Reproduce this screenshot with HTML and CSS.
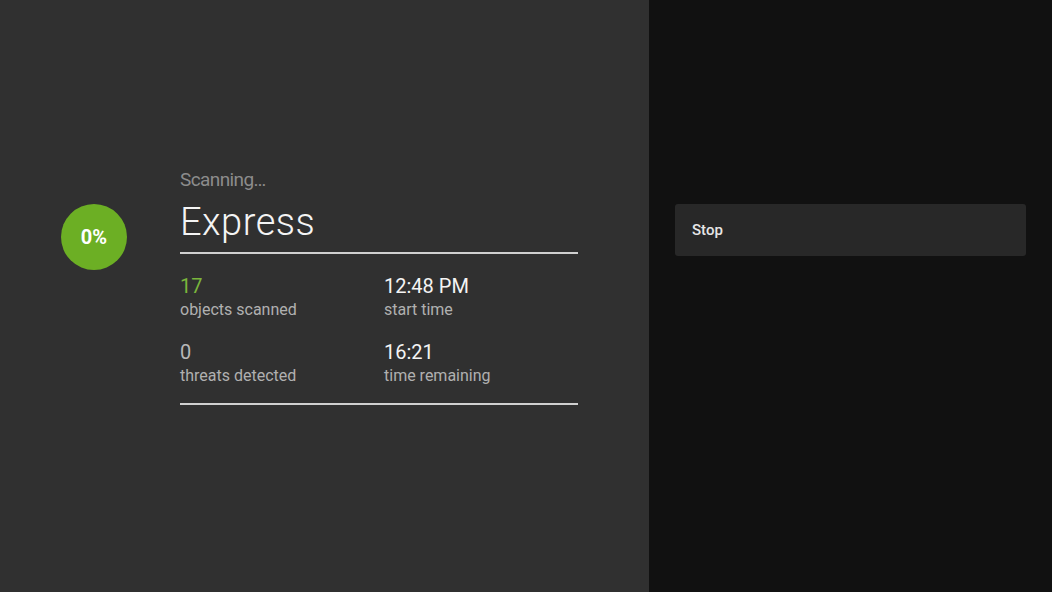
FILE: index.html
```html
<!DOCTYPE html>
<html>
<head>
<meta charset="utf-8">
<link rel="stylesheet" href="styles.css">
</head>
<body>
<div class="screen">
  <section class="main">
    <div class="progress">0%</div>
    <div class="details">
      <div class="status">Scanning…</div>
      <h1 class="title">Express</h1>
      <div class="stats">
        <div class="stat">
          <div class="value green">17</div>
          <div class="label">objects scanned</div>
        </div>
        <div class="stat">
          <div class="value">12:48 PM</div>
          <div class="label">start time</div>
        </div>
        <div class="stat">
          <div class="value dim">0</div>
          <div class="label">threats detected</div>
        </div>
        <div class="stat">
          <div class="value">16:21</div>
          <div class="label">time remaining</div>
        </div>
      </div>
    </div>
  </section>
  <aside class="actions">
    <button class="action">Stop</button>
  </aside>
</div>
</body>
</html>
```

FILE: styles.css
```css
html, body {
  margin: 0;
  padding: 0;
  height: 100%;
}
body {
  font-family: Roboto, "Noto Sans", sans-serif;
  background: #111111;
  overflow: hidden;
}
.screen {
  display: flex;
  width: 1052px;
  height: 592px;
}
.main {
  width: 649px;
  flex: none;
  background: #303030;
  display: flex;
  align-items: flex-start;
  box-sizing: border-box;
  padding: 168px 0 0 61px;
  gap: 53px;
}
.progress {
  width: 66px;
  height: 66px;
  margin-top: 36px;
  border-radius: 50%;
  background: #6caf24;
  color: #ffffff;
  font-weight: 700;
  font-size: 20px;
  display: flex;
  align-items: center;
  justify-content: center;
  flex: none;
}
.details {
  width: 398px;
}
.status {
  font-size: 19px;
  line-height: 24px;
  letter-spacing: -0.6px;
  color: #8c8c8c;
}
.title {
  margin: 8px 0 0;
  font-size: 38px;
  line-height: 44px;
  font-weight: 300;
  letter-spacing: 0.5px;
  color: #f4f4f4;
  padding-bottom: 8px;
  border-bottom: 2px solid #d0d0d0;
}
.stats {
  display: grid;
  grid-template-columns: 204px 1fr;
  row-gap: 18px;
  padding: 19px 0 16px;
  border-bottom: 2px solid #d0d0d0;
}
.value {
  font-size: 20px;
  line-height: 26px;
  color: #f4f4f4;
}
.value.green {
  color: #7ab53c;
}
.value.dim {
  color: #b8b8b8;
}
.label {
  font-size: 16px;
  line-height: 22px;
  color: #b0b0b0;
}
.actions {
  flex: 1;
  background: #111111;
  box-sizing: border-box;
  padding: 204px 26px 0 26px;
}
.action {
  display: block;
  width: 100%;
  height: 52px;
  border: none;
  border-radius: 3px;
  background: #282828;
  color: #e6e6e6;
  font-family: Roboto, "Noto Sans", sans-serif;
  font-weight: 500;
  font-size: 15px;
  text-align: left;
  padding: 0 0 0 17px;
  margin: 0;
}
```
